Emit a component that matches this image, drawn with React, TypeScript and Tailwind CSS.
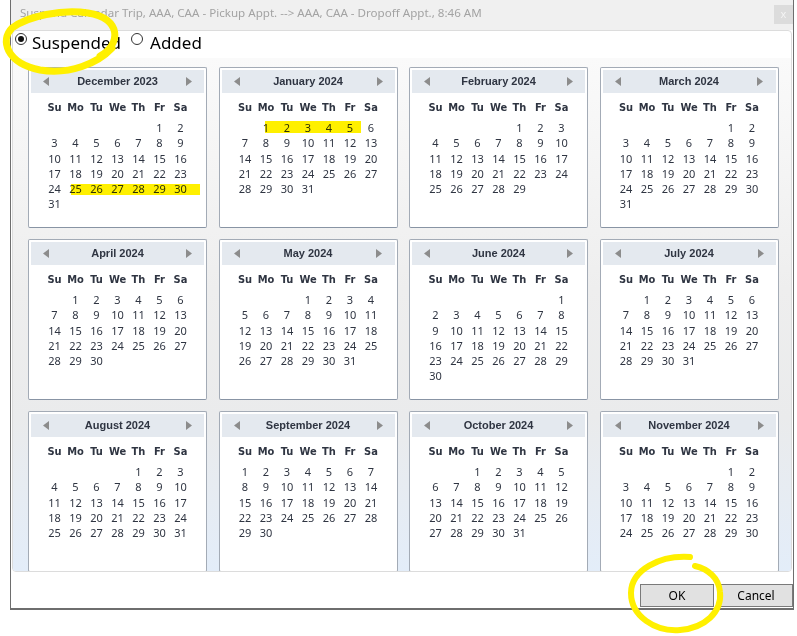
import React from "react";

const MONTH_NAMES = [
  "January", "February", "March", "April", "May", "June",
  "July", "August", "September", "October", "November", "December",
];

const MONTHS: [number, number][] = [
  [2023, 11], [2024, 0], [2024, 1], [2024, 2],
  [2024, 3], [2024, 4], [2024, 5], [2024, 6],
  [2024, 7], [2024, 8], [2024, 9], [2024, 10],
];

const WEEKDAYS = ["Su", "Mo", "Tu", "We", "Th", "Fr", "Sa"];

function buildWeeks(y: number, m: number): (number | null)[][] {
  const first = new Date(y, m, 1).getDay();
  const days = new Date(y, m + 1, 0).getDate();
  const cells: (number | null)[] = [];
  for (let i = 0; i < first; i++) cells.push(null);
  for (let d = 1; d <= days; d++) cells.push(d);
  while (cells.length % 7) cells.push(null);
  const weeks: (number | null)[][] = [];
  for (let i = 0; i < cells.length; i += 7) weeks.push(cells.slice(i, i + 7));
  return weeks;
}

function LeftArrow() {
  return (
    <svg width="6" height="9" viewBox="0 0 6 9">
      <path d="M6 0 L0 4.5 L6 9 Z" fill="#8c8c8c" />
    </svg>
  );
}
function RightArrow() {
  return (
    <svg width="6" height="9" viewBox="0 0 6 9">
      <path d="M0 0 L6 4.5 L0 9 Z" fill="#8c8c8c" />
    </svg>
  );
}

function Calendar({ y, m, idx }: { y: number; m: number; idx: number }) {
  const weeks = buildWeeks(y, m);
  return (
    <div className="relative w-[179px] h-[161px] bg-white border border-[#a3abb6] border-b-[#8894a4] rounded-[2px] px-[2px] pt-[2px]">
      <div className="h-[23px] bg-[#e4e9ef] flex items-center justify-between px-[12px]">
        <LeftArrow />
        <span className="font-['Liberation_Sans',sans-serif] font-bold text-[11px] text-[#2f3542]">
          {MONTH_NAMES[m]} {y}
        </span>
        <RightArrow />
      </div>
      <div className="mx-auto w-[147px] mt-[7px] grid grid-cols-7 h-[15px] items-center">
        {WEEKDAYS.map((w) => (
          <div
            key={w}
            className="text-center font-['DejaVu_Sans_Condensed','Liberation_Sans',sans-serif] font-bold text-[11px] leading-[15px] text-[#2f3542]"
          >
            {w}
          </div>
        ))}
      </div>
      <div className="mx-auto w-[147px] mt-[5px] grid grid-cols-7 auto-rows-[15.3px]">
        {weeks.flat().map((d, i) => (
          <div
            key={i}
            className="text-center font-['Noto_Sans',sans-serif] text-[11px] leading-[15.3px] text-[#2f3542]"
          >
            {d ?? ""}
          </div>
        ))}
      </div>
      {idx === 0 && (
        <div className="absolute left-[42px] top-[116px] w-[129px] h-[11px] bg-[#fff000] mix-blend-multiply" />
      )}
      {idx === 1 && (
        <div className="absolute left-[45px] top-[53px] w-[96px] h-[12px] bg-[#fff000] mix-blend-multiply" />
      )}
    </div>
  );
}

function Radio({ checked }: { checked?: boolean }) {
  return (
    <div className="w-[12px] h-[12px] rounded-full border border-[#333] bg-white flex items-center justify-center shrink-0">
      {checked && <div className="w-[6px] h-[6px] rounded-full bg-[#111]" />}
    </div>
  );
}

export default function App() {
  return (
    <div className="relative w-[797px] h-[636px] bg-white overflow-hidden font-['Noto_Sans',sans-serif]">
      <div className="ml-[10px] w-[784px] h-[610px] flex flex-col border-l border-r border-b-2 border-[#6e6e6e] bg-white">
        {/* title bar */}
        <div className="h-[30px] bg-[#f0f0f0] flex items-start shrink-0">
          <div className="pl-[9px] pt-[4px] text-[11.6px] leading-[17px] text-[#a3a3a3] whitespace-nowrap">
            Suspend Calendar Trip, AAA, CAA - Pickup Appt. --&gt; AAA, CAA - Dropoff Appt., 8:46 AM
          </div>
          <div className="ml-auto mt-[5px] w-[19px] h-[19px] bg-[#dcdcdc] text-[#f4f4f4] text-[11px] leading-[17px] text-center">
            x
          </div>
        </div>
        {/* content panel */}
        <div className="h-[542px] shrink-0 mx-[1px] border border-[#dcdcdc] rounded-[4px] bg-white overflow-hidden flex flex-col">
          <div className="h-[27px] shrink-0 flex items-start pl-[2px]">
            <div className="mt-[2px]"><Radio checked /></div>
            <span className="ml-[5px] mt-[1px] text-[17px] leading-[22px] text-black">Suspended</span>
            <div className="ml-[10px] mt-[2px]"><Radio /></div>
            <span className="ml-[7px] mt-[1px] text-[17px] leading-[22px] text-black">Added</span>
          </div>
          <div className="flex-1 overflow-hidden pl-[15px] pt-[9px] bg-[linear-gradient(180deg,#fafafa_0%,#eeeeee_45%,#eaebec_70%,#e3edf9_100%)]">
            <div className="grid grid-cols-[repeat(4,179px)] gap-x-[11.5px] gap-y-[11px]">
              {MONTHS.map(([y, m], i) => (
                <Calendar key={i} y={y} m={m} idx={i} />
              ))}
            </div>
          </div>
        </div>
        {/* button bar */}
        <div className="flex-1 flex justify-end items-start pt-[12px] gap-[5px]">
          <button className="w-[74px] h-[23px] bg-[#e1e1e1] border border-[#7a7a7a] text-[12px] text-black">
            OK
          </button>
          <button className="w-[74px] h-[23px] bg-[#e1e1e1] border border-[#7a7a7a] text-[12px] text-black">
            Cancel
          </button>
        </div>
      </div>

      {/* highlighter annotations */}
      <svg
        className="absolute left-0 top-0 pointer-events-none"
        width="797"
        height="636"
        viewBox="0 0 797 636"
      >
        <path
          d="M100 56 C121 45, 122 18, 88 13 C62 9, 28 16, 12 28 C0 40, 6 63, 40 70 C70 75, 98 63, 112 48"
          fill="none"
          stroke="#fff000"
          strokeWidth="7"
          strokeLinecap="round"
        />
        <path
          d="M690 557 C660 555, 631 570, 631 593 C631 616, 655 632, 680 630 C705 628, 722 612, 720 592 C719 578, 708 569, 695 566"
          fill="none"
          stroke="#fff000"
          strokeWidth="6"
          strokeLinecap="round"
        />
      </svg>
    </div>
  );
}
